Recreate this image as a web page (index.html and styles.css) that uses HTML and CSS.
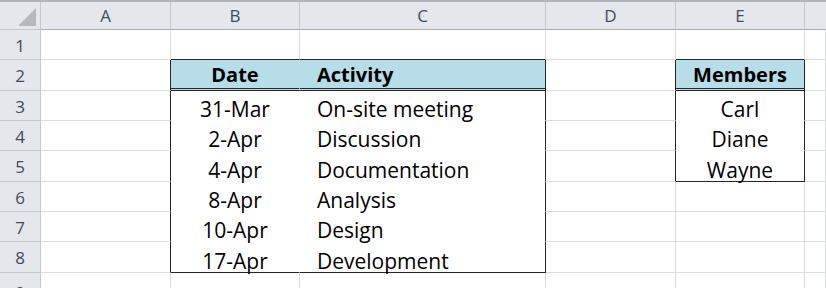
FILE: index.html
```html
<!DOCTYPE html>
<html>
<head>
<meta charset="utf-8">
<link rel="stylesheet" href="styles.css">
</head>
<body>
<div class="sheet">
  <!-- header row -->
  <div class="c h corner"><svg width="18" height="18" viewBox="0 0 18 18"><polygon points="18,0 18,18 0,18" fill="#b4b9c0"/></svg></div>
  <div class="c h col">A</div>
  <div class="c h col">B</div>
  <div class="c h col">C</div>
  <div class="c h col">D</div>
  <div class="c h col">E</div>
  <div class="c h col last"></div>

  <!-- row 1 -->
  <div class="c h rn">1</div>
  <div class="c"></div>
  <div class="c tt"></div>
  <div class="c tt"></div>
  <div class="c"></div>
  <div class="c tt"></div>
  <div class="c"></div>

  <!-- row 2 -->
  <div class="c h rn">2</div>
  <div class="c tl"></div>
  <div class="c hd mid center">Date</div>
  <div class="c hd re indent">Activity</div>
  <div class="c tl"></div>
  <div class="c hd re center">Members</div>
  <div class="c"></div>

  <!-- row 3 -->
  <div class="c h rn">3</div>
  <div class="c tl"></div>
  <div class="c in center">31-Mar</div>
  <div class="c in re indent">On-site meeting</div>
  <div class="c tl"></div>
  <div class="c in re center">Carl</div>
  <div class="c"></div>

  <!-- row 4 -->
  <div class="c h rn">4</div>
  <div class="c tl"></div>
  <div class="c in center">2-Apr</div>
  <div class="c in re indent">Discussion</div>
  <div class="c tl"></div>
  <div class="c in re center">Diane</div>
  <div class="c"></div>

  <!-- row 5 -->
  <div class="c h rn">5</div>
  <div class="c tl"></div>
  <div class="c in center">4-Apr</div>
  <div class="c in re indent">Documentation</div>
  <div class="c tl"></div>
  <div class="c in re be center">Wayne</div>
  <div class="c"></div>

  <!-- row 6 -->
  <div class="c h rn">6</div>
  <div class="c tl"></div>
  <div class="c in center">8-Apr</div>
  <div class="c in re indent">Analysis</div>
  <div class="c"></div>
  <div class="c"></div>
  <div class="c"></div>

  <!-- row 7 -->
  <div class="c h rn">7</div>
  <div class="c tl"></div>
  <div class="c in center">10-Apr</div>
  <div class="c in re indent">Design</div>
  <div class="c"></div>
  <div class="c"></div>
  <div class="c"></div>

  <!-- row 8 -->
  <div class="c h rn">8</div>
  <div class="c tl"></div>
  <div class="c in be center">17-Apr</div>
  <div class="c in re be indent">Development</div>
  <div class="c"></div>
  <div class="c"></div>
  <div class="c"></div>

  <!-- row 9 -->
  <div class="c h rn r9">9</div>
  <div class="c"></div>
  <div class="c"></div>
  <div class="c"></div>
  <div class="c"></div>
  <div class="c"></div>
  <div class="c"></div>
</div>
</body>
</html>
```

FILE: styles.css
```css
html, body {
  margin: 0;
  padding: 0;
  background: #ffffff;
}

.sheet {
  display: grid;
  grid-template-columns: 41px 130px 129px 246px 130px 129px 1fr;
  grid-template-rows: 28px 30px 31px 30px 30px 31px 30px 30px 31px 30px;
  width: 826px;
  height: 288px;
  overflow: hidden;
  border-top: 2px solid #b1b5bb;
  box-sizing: border-box;
  font-family: "Open Sans", Lato, sans-serif;
  font-size: 21px;
  color: #000;
}

.c {
  box-sizing: border-box;
  border-right: 1px solid #dadcdd;
  border-bottom: 1px solid #dadcdd;
  display: flex;
  align-items: flex-end;
  line-height: 22px;
  padding-bottom: 0;
  white-space: nowrap;
}

.h {
  background: #e4e7eb;
  border-right-color: #c3c8ce;
  border-bottom-color: #c3c8ce;
  color: #3e4c61;
  font-size: 17px;
  justify-content: center;
  align-items: center;
  padding-top: 2px;
}

.col {
  border-bottom-color: #a9aeb5;
  padding-top: 0;
}

.r9 {
  align-items: flex-start;
  padding-top: 9px;
}

.corner {
  justify-content: flex-end;
  align-items: flex-end;
  padding: 0 4px 3px 0;
}

.last {
  border-right: none;
}

.center {
  justify-content: center;
}

.indent {
  padding-left: 17px;
}

.tl {
  border-right-color: #262626;
}

.tt {
  border-bottom-color: #262626;
}

.hd {
  background: #b7dde8;
  font-weight: bold;
  font-size: 20px;
  border-bottom: 3px double #262626;
  padding-bottom: 2px;
}

.mid {
  border-right-color: #b7dde8;
}

.in {
  border-right-color: #ffffff;
  border-bottom-color: #ffffff;
}

.re {
  border-right-color: #262626;
}

.be {
  border-bottom-color: #262626;
}
```
